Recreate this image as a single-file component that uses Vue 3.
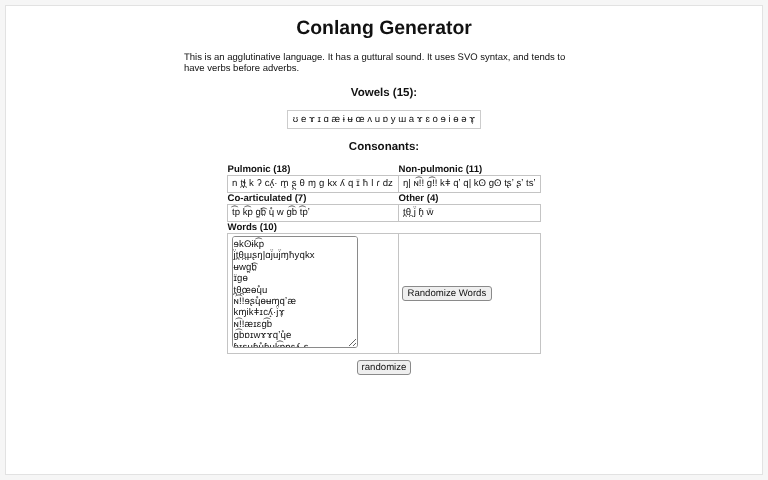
<template>
  <div class="page">
    <h1>Conlang Generator</h1>
    <p class="description">This is an agglutinative language. It has a guttural sound. It uses SVO syntax, and tends to have verbs before adverbs.</p>
    <h2>Vowels ({{ vowelCount }}):</h2>
    <div class="vowels">{{ vowels }}</div>
    <h2>Consonants:</h2>
    <table class="sounds">
      <tbody>
        <tr class="heads">
          <th>Pulmonic (18)</th>
          <th>Non-pulmonic (11)</th>
        </tr>
        <tr>
          <td class="pulmonic">{{ pulmonic }}</td>
          <td>{{ nonPulmonic }}</td>
        </tr>
        <tr class="heads">
          <th>Co-articulated (7)</th>
          <th>Other (4)</th>
        </tr>
        <tr>
          <td>{{ coarticulated }}</td>
          <td>{{ other }}</td>
        </tr>
        <tr class="heads">
          <th colspan="2">Words (10)</th>
        </tr>
        <tr>
          <td class="words-cell">
            <textarea class="words" :value="words" spellcheck="false"></textarea>
          </td>
          <td class="button-cell">
            <button class="words-button">Randomize Words</button>
          </td>
        </tr>
      </tbody>
    </table>
    <div class="actions">
      <button>randomize</button>
    </div>
  </div>
</template>

<script setup>
const vowelCount = 15;
const vowels = 'ʊ e ɤ ɪ ɑ æ ɨ ʉ œ ʌ u ɒ y ɯ a ɤ ɛ o ɘ i ɵ ə ɤ̞';
const pulmonic = 'n t̪ɬ̪ k ʔ cʎ̝· m̥ ʂ̪ θ ɱ ɡ kx ʎ q ɪ̈ ħ l ɾ dz';
const nonPulmonic = 'ŋ| ɴ͡ǃǃ ɡ͡ǃǃ kǂ qʼ q| kʘ ɡʘ tʂʼ ʂʼ tsʼ';
const coarticulated = 't͡p k͡p ɡ̤͡b̤ ɥ̊ w ɡ͡b t͡pʼ';
const other = 't̪θ̪ j̈ ɦ̥ ẅ';
const words = [
  'ɘkʘɨk͡p',
  'j̈t̪θ̪ɯ̥ʂŋ|ɑj̈uj̈ɱħyqkx',
  'ʉwɡ̤͡b̤',
  'ɪ̈ɡɵ',
  't̪θ̪œɵɥ̊u',
  'ɴ͡ǃǃɘʂɥ̊ɵʉɱqʼæ',
  'kɱikǂɪcʎ̝·j̈ɤ̞',
  'ɴ͡ǃǃæɪɛɡ͡b',
  'ɡ͡bɒɪwɤɤqʼɥ̊e',
  'ɦ̥ɪʂuɦ̥ɥ̊ɦ̥ʉk͡pɒɛʎ̝·ʂ'
].join('\n');
</script>

<style>
html, body {
  margin: 0;
  height: 100%;
  background: #f6f6f6;
}
</style>

<style scoped>
.page {
  box-sizing: border-box;
  width: 758px;
  height: 470px;
  margin: 5px;
  padding: 0 178px;
  background: #fff;
  border: 1px solid #e2e2e2;
  font-family: "Liberation Sans", "DejaVu Sans", Arial, sans-serif;
  font-size: 9.6px;
  text-rendering: geometricPrecision;
  color: #111;
  overflow: hidden;
}

h1 {
  margin: 11px 0 13px;
  font-size: 19.4px;
  line-height: 22px;
  text-align: center;
}

.description {
  margin: 0 0 12.5px;
  font-size: 9.5px;
  line-height: 11px;
}

h2 {
  margin: 0 0 10px;
  font-size: 11.52px;
  line-height: 13px;
  text-align: center;
}

.vowels {
  width: fit-content;
  margin: 0 auto 12.5px;
  padding: 3px 5px;
  border: 1px solid #ccc;
  line-height: 11px;
  white-space: nowrap;
}

.sounds {
  width: 313px;
  margin: 0 auto;
  border-collapse: collapse;
  table-layout: fixed;
}

.sounds th {
  width: 171px;
  padding: 0;
  font-size: 9.6px;
  line-height: 11px;
  text-align: left;
}

.sounds th + th {
  width: 142px;
}

.sounds td {
  padding: 2px 4px;
  border: 1px solid #c4c4c4;
  font-size: 9.6px;
  line-height: 12px;
  white-space: nowrap;
}

.sounds td.pulmonic {
  word-spacing: 0.4px;
}

.sounds td.words-cell {
  padding: 2px 4px 5px;
}

.sounds td.button-cell {
  padding-left: 3px;
}

.words {
  display: block;
  box-sizing: border-box;
  width: 126px;
  height: 112px;
  padding: 2px 0.5px;
  font-family: "Liberation Sans", "DejaVu Sans", Arial, sans-serif;
  font-size: 9.6px;
  line-height: 11.4px;
  letter-spacing: 0.15px;
  text-rendering: geometricPrecision;
  color: #111;
  border: 1px solid #8a8a8a;
  border-radius: 3px;
}

button {
  padding: 1px 4px;
  font-family: "Liberation Sans", "DejaVu Sans", Arial, sans-serif;
  font-size: 9.6px;
  line-height: 11px;
  text-rendering: geometricPrecision;
  color: #111;
  background: #efefef;
  border: 1px solid #8a8a8a;
  border-radius: 3px;
}

.words-button {
  padding: 1px 4.5px;
}

.actions {
  margin-top: 5.5px;
  text-align: center;
}
</style>
